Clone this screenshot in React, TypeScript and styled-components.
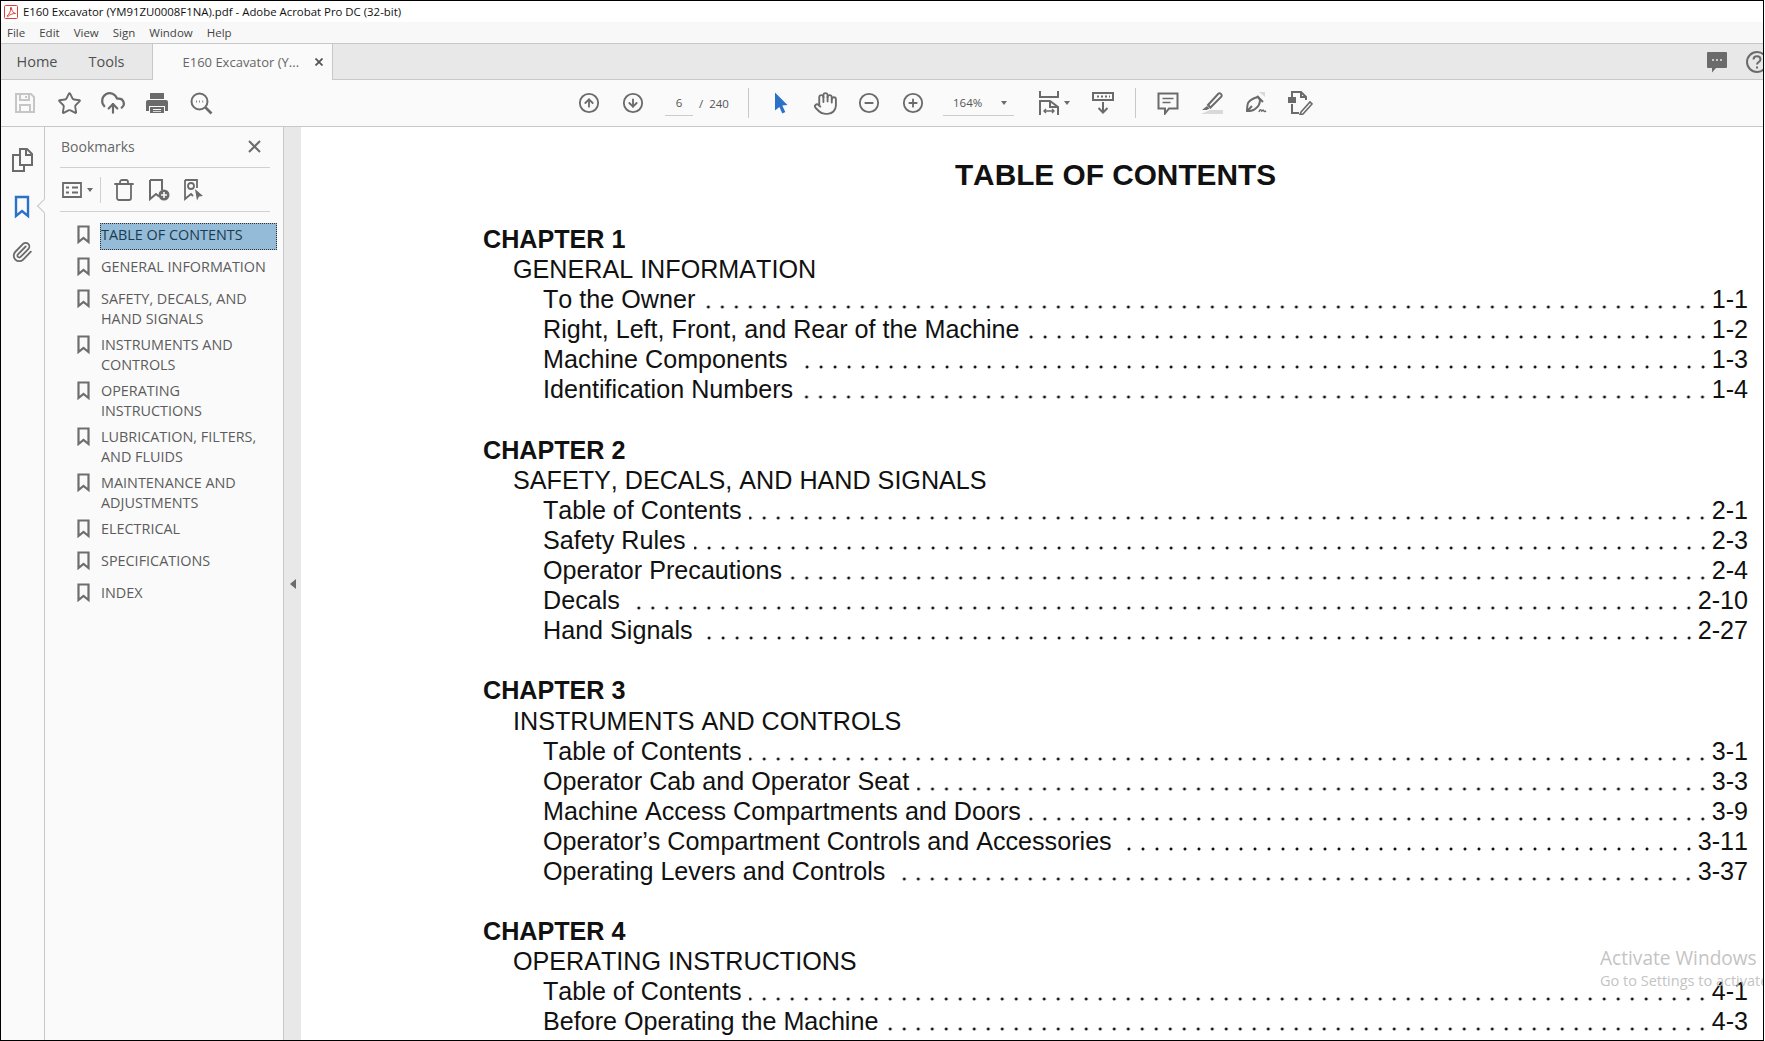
import React from "react";
import styled, { createGlobalStyle } from "styled-components";
import {
  CircleArrowDown,
  CircleArrowUp,
  CircleMinus,
  CirclePlus,
  CloudUpload,
  Hand,
  Paperclip,
  Star,
  Trash,
} from "lucide-react";

const GlobalStyle = createGlobalStyle`
  html, body {
    margin: 0;
    background: #fff;
    overflow: hidden;
  }
  * {
    box-sizing: border-box;
  }
`;

const GREY = "#6b6b6b";

const bookmarks = [
  "TABLE OF CONTENTS",
  "GENERAL INFORMATION",
  "SAFETY, DECALS, AND HAND SIGNALS",
  "INSTRUMENTS AND CONTROLS",
  "OPERATING INSTRUCTIONS",
  "LUBRICATION, FILTERS, AND FLUIDS",
  "MAINTENANCE AND ADJUSTMENTS",
  "ELECTRICAL",
  "SPECIFICATIONS",
  "INDEX",
];

const chapters = [
  {
    name: "CHAPTER 1",
    title: "GENERAL INFORMATION",
    items: [
      ["To the Owner", "1-1"],
      ["Right, Left, Front, and Rear of the Machine", "1-2"],
      ["Machine Components", "1-3"],
      ["Identification Numbers", "1-4"],
    ],
  },
  {
    name: "CHAPTER 2",
    title: "SAFETY, DECALS, AND HAND SIGNALS",
    items: [
      ["Table of Contents", "2-1"],
      ["Safety Rules", "2-3"],
      ["Operator Precautions", "2-4"],
      ["Decals", "2-10"],
      ["Hand Signals", "2-27"],
    ],
  },
  {
    name: "CHAPTER 3",
    title: "INSTRUMENTS AND CONTROLS",
    items: [
      ["Table of Contents", "3-1"],
      ["Operator Cab and Operator Seat", "3-3"],
      ["Machine Access Compartments and Doors", "3-9"],
      ["Operator’s Compartment Controls and Accessories", "3-11"],
      ["Operating Levers and Controls", "3-37"],
    ],
  },
  {
    name: "CHAPTER 4",
    title: "OPERATING INSTRUCTIONS",
    items: [
      ["Table of Contents", "4-1"],
      ["Before Operating the Machine", "4-3"],
    ],
  },
];

const SaveIcon = () => (
  <svg width="24" height="24" viewBox="0 0 24 24" fill="none" stroke="#c6c6c6" strokeWidth="2">
    <path d="M3 3h15l3 3v15H3z" />
    <path d="M7 3v6h9V3M13 5v2M7 21v-7h10v7" />
  </svg>
);

const PrinterIcon = () => (
  <svg width="24" height="24" viewBox="0 0 24 24" fill={GREY}>
    <path d="M5 2h14v6H5z" />
    <path d="M3 9h18a2 2 0 0 1 2 2v9h-3v-5H4v5H1v-9a2 2 0 0 1 2-2z" />
    <path d="M5 16h14v6H5zM8 18v1h8v-1zM8 20v.8h8V20z" fillRule="evenodd" />
  </svg>
);

const FindIcon = () => (
  <svg width="24" height="24" viewBox="0 0 24 24" fill="none" stroke={GREY} strokeWidth="2">
    <circle cx="10.5" cy="10.5" r="8" />
    <path d="M16.5 16.5l6 6" strokeWidth="2.6" />
    <path d="M7 10.5h.8M10.2 10.5h.8M13.4 10.5h.8" strokeWidth="2" />
  </svg>
);

const CursorIcon = () => (
  <svg width="24" height="24" viewBox="0 0 24 24" fill="#2a72c8">
    <path d="M6 1.5l12.5 12.6-5.2.5 3 6.4-3 1.4-2.9-6.5L6 19.5z" />
  </svg>
);

const FitWidthIcon = () => (
  <svg width="24" height="26" viewBox="0 0 24 26" fill="none" stroke={GREY} strokeWidth="2">
    <path d="M3 1v6h18V1" />
    <path d="M3 25V11h10l8 6v8" />
    <path d="M13 11v6h8" />
    <path d="M7 21h10M9 19l-2 2 2 2M15 19l2 2-2 2" strokeWidth="1.4" />
  </svg>
);

const ScrollIcon = () => (
  <svg width="24" height="24" viewBox="0 0 24 24" fill="none" stroke={GREY} strokeWidth="2">
    <path d="M2 2h20v7H2z" />
    <path d="M6 5.5h2M10 5.5h2M14 5.5h2M18 5.5h1" strokeWidth="2" />
    <path d="M12 11v10M7.5 17l4.5 4.5 4.5-4.5" />
  </svg>
);

const CommentIcon = () => (
  <svg width="24" height="24" viewBox="0 0 24 24" fill="none" stroke={GREY} strokeWidth="2">
    <path d="M2.5 2.5h19v15H13l-4 5v-5H2.5z" />
    <path d="M6.5 7.5h11M6.5 11.5h8" strokeWidth="1.4" />
  </svg>
);

const HighlightIcon = () => (
  <svg width="24" height="24" viewBox="0 0 24 24" fill="none" stroke={GREY} strokeWidth="2">
    <path d="M1 23h22v-4H10z" fill="#d9d9d9" stroke="none" />
    <path d="M8 14L18.5 2.5c1.5-1 4 1 3 3L10.5 16.5z" />
    <path d="M7 15l2.500 2.500-3 1.500H2z" fill={GREY} stroke="none" />
  </svg>
);

const SignIcon = () => (
  <svg width="24" height="24" viewBox="0 0 24 24" fill="none" stroke={GREY} strokeWidth="2">
    <path d="M15 1h6v5z" fill="#d9d9d9" stroke="none" />
    <path d="M14 6c-4 1-8 3-10 6-1 3-1 6-1 8 3 0 6 0 8-2 3-2 5-6 5-9z" />
    <path d="M13 5l6 6M3 20l5-5" />
    <path d="M15 21c1-3 2-3 2.500-1 .5 1 1.500-2 2-.5.5 1.500 1.500 1 2.500.5" strokeWidth="1.4" />
  </svg>
);

const EditPdfIcon = () => (
  <svg width="26" height="24" viewBox="0 0 26 24" fill="none" stroke={GREY} strokeWidth="2">
    <path d="M5 6V1h9l5 5v3M5 13v9h7" />
    <path d="M14 1v5h5" />
    <path d="M1 6h8v6H1z" fill={GREY} stroke="none" />
    <path d="M14 21l9-10 2 2-9 10-3 .5z" strokeWidth="1.6" />
  </svg>
);

const ChatIcon = () => (
  <svg width="22" height="22" viewBox="0 0 22 22" fill={GREY}>
    <path d="M2 1h18a1 1 0 0 1 1 1v14a1 1 0 0 1-1 1H10l-4 4.500V17H2a1 1 0 0 1-1-1V2a1 1 0 0 1 1-1z" />
    <circle cx="7" cy="9" r="1" fill="#e8e8e8" />
    <circle cx="11" cy="9" r="1" fill="#e8e8e8" />
    <circle cx="15" cy="9" r="1" fill="#e8e8e8" />
  </svg>
);

const HelpIcon = () => (
  <svg width="22" height="22" viewBox="0 0 22 22" fill="none" stroke={GREY} strokeWidth="2">
    <circle cx="11" cy="11" r="10" />
    <path d="M7.500 8.500c0-4.500 7-4.500 7 0 0 2.500-3.500 2.500-3.500 5" />
    <path d="M11 15.500v2" />
  </svg>
);

const PdfBadge = () => (
  <svg width="14" height="14" viewBox="0 0 14 14" fill="none">
    <rect x="0.500" y="0.500" width="13" height="13" rx="1" fill="#fff" stroke="#d8403a" />
    <path d="M3 11c2-1 4-5 3.500-8 0-1 1-1 1 0 0 3 2 5 4 5.500-3 0-6 1-7.500 3-.5.5-1 0-1-.5z" stroke="#d8403a" />
  </svg>
);

const PagesIcon = () => (
  <svg width="22" height="24" viewBox="0 0 22 24" fill="none" stroke={GREY} strokeWidth="2">
    <path d="M9 1h7l5 5v11H9z" />
    <path d="M15 1v6h6" />
    <path d="M9 7H2v16h11v-6" />
  </svg>
);

const BookmarkNavIcon = () => (
  <svg width="16" height="24" viewBox="0 0 16 24" fill="none" stroke="#2a72c8" strokeWidth="2.400">
    <path d="M2 2h12v19l-6-5-6 5z" />
  </svg>
);

const ListOptionsIcon = () => (
  <svg width="20" height="18" viewBox="0 0 20 18" fill="none" stroke={GREY} strokeWidth="1.800">
    <path d="M1 2h18v14H1z" />
    <path d="M4 6.500h3M4 11.500h3M10 6.500h6M10 11.500h6" strokeWidth="2.200" />
  </svg>
);

const AddBookmarkIcon = () => (
  <svg width="22" height="24" viewBox="0 0 22 24" fill="none" stroke={GREY} strokeWidth="2">
    <path d="M2 2h12v10M2 2v19l6-5 3 2.500" />
    <circle cx="16" cy="17" r="5.500" fill={GREY} stroke="none" />
    <path d="M13 17h6M16 14v6" stroke="#fafafa" strokeWidth="1.600" />
  </svg>
);

const FindBookmarkIcon = () => (
  <svg width="22" height="24" viewBox="0 0 22 24" fill="none" stroke={GREY} strokeWidth="1.800">
    <path d="M2 2h12v8M2 2v19l6-5 2 2" />
    <circle cx="8" cy="8" r="3" />
    <path d="M12 11l8 7-4 .5-2 4z" fill={GREY} stroke="none" />
  </svg>
);

const BookmarkRowIcon = () => (
  <svg width="13" height="19" viewBox="0 0 13 19" fill="none" stroke="#6e6e6e" strokeWidth="2.200">
    <path d="M1.500 1.500h10v15.500l-5-4-5 4z" />
  </svg>
);

const CloseIcon = () => (
  <svg width="13" height="13" viewBox="0 0 13 13" stroke={GREY} strokeWidth="2">
    <path d="M1 1l11 11M12 1L1 12" />
  </svg>
);

const App: React.FC = () => (
  <>
    <GlobalStyle />
    <Frame>
      <TitleBar>
        <PdfBadge />
        <span>E160 Excavator (YM91ZU0008F1NA).pdf - Adobe Acrobat Pro DC (32-bit)</span>
      </TitleBar>
      <MenuBar>
        {["File", "Edit", "View", "Sign", "Window", "Help"].map((m) => (
          <span key={m}>{m}</span>
        ))}
      </MenuBar>
      <TabBar>
        <NavTab>Home</NavTab>
        <NavTab>Tools</NavTab>
        <DocTab>
          <span>E160 Excavator (Y...</span>
          <TabClose>
            <svg width="8" height="8" viewBox="0 0 8 8" stroke="#555" strokeWidth="1.800">
              <path d="M.5.500l7 7M7.500.500l-7 7" />
            </svg>
          </TabClose>
        </DocTab>
        <TabActions>
          <ChatIcon />
          <HelpIcon />
        </TabActions>
      </TabBar>
      <Toolbar>
        <ToolGroup>
          <ToolButton><SaveIcon /></ToolButton>
          <ToolButton><Star size={25} strokeWidth={1.800} /></ToolButton>
          <ToolButton><CloudUpload size={26} strokeWidth={2} /></ToolButton>
          <ToolButton><PrinterIcon /></ToolButton>
          <ToolButton><FindIcon /></ToolButton>
        </ToolGroup>
        <CenterGroup>
          <ToolButton><CircleArrowUp size={22} strokeWidth={2} /></ToolButton>
          <ToolButton><CircleArrowDown size={22} strokeWidth={2} /></ToolButton>
          <PageField>6</PageField>
          <PageTotal>/&nbsp;&nbsp;240</PageTotal>
          <ToolDivider $before="9px" $after="10px" />
          <ToolButton><CursorIcon /></ToolButton>
          <ToolButton><Hand size={25} strokeWidth={1.800} /></ToolButton>
          <ToolButton><CircleMinus size={22} strokeWidth={2} /></ToolButton>
          <ToolButton><CirclePlus size={22} strokeWidth={2} /></ToolButton>
          <ZoomField>
            <span>164%</span>
            <Caret />
          </ZoomField>
          <FitButton>
            <FitWidthIcon />
            <Caret />
          </FitButton>
          <ToolButton><ScrollIcon /></ToolButton>
          <ToolDivider $before="10px" $after="10px" />
          <ToolButton><CommentIcon /></ToolButton>
          <ToolButton><HighlightIcon /></ToolButton>
          <ToolButton><SignIcon /></ToolButton>
          <ToolButton><EditPdfIcon /></ToolButton>
        </CenterGroup>
      </Toolbar>
      <Body>
        <Rail>
          <RailItem><PagesIcon /></RailItem>
          <RailItem $active><BookmarkNavIcon /></RailItem>
          <RailItem><Paperclip size={22} strokeWidth={2} /></RailItem>
        </Rail>
        <Panel>
          <PanelHeader>
            <span>Bookmarks</span>
            <CloseIcon />
          </PanelHeader>
          <PanelTools>
            <OptionsButton>
              <ListOptionsIcon />
              <Caret />
            </OptionsButton>
            <PanelToolDivider />
            <PanelTool><Trash size={24} strokeWidth={1.800} /></PanelTool>
            <PanelTool><AddBookmarkIcon /></PanelTool>
            <PanelTool><FindBookmarkIcon /></PanelTool>
          </PanelTools>
          <BookmarkList>
            {bookmarks.map((b, i) => (
              <BookmarkRow key={b}>
                <BookmarkMark><BookmarkRowIcon /></BookmarkMark>
                <BookmarkLabel $selected={i === 0}>{b}</BookmarkLabel>
              </BookmarkRow>
            ))}
          </BookmarkList>
        </Panel>
        <Gutter>
          <CollapseArrow />
        </Gutter>
        <Page>
          <PageTitle>TABLE OF CONTENTS</PageTitle>
          {chapters.map((c) => (
            <Chapter key={c.name}>
              <ChapterName>{c.name}</ChapterName>
              <ChapterTitle>{c.title}</ChapterTitle>
              {c.items.map(([label, num]) => (
                <TocRow key={label}>
                  <span>{label}</span>
                  <Leader />
                  <TocNumber>{num}</TocNumber>
                </TocRow>
              ))}
            </Chapter>
          ))}
        </Page>
      </Body>
      <Watermark>
        <WatermarkTitle>Activate Windows</WatermarkTitle>
        <WatermarkText>Go to Settings to activate Windows.</WatermarkText>
      </Watermark>
    </Frame>
  </>
);

const Frame = styled.div`
  position: relative;
  display: flex;
  flex-direction: column;
  width: 1764px;
  height: 1041px;
  border: 1px solid #000;
  overflow: hidden;
  background: #fff;
  font-family: "Open Sans", "Noto Sans", sans-serif;
  color: #555;
`;

const TitleBar = styled.div`
  display: flex;
  align-items: center;
  gap: 5px;
  height: 21px;
  padding-left: 3px;
  font-size: 11.4px;
  color: #111;
`;

const MenuBar = styled.div`
  display: flex;
  align-items: center;
  gap: 14px;
  height: 21px;
  padding-left: 6px;
  background: #f8f8f8;
  font-size: 11.500px;
  color: #444;
`;

const TabBar = styled.div`
  display: flex;
  height: 37px;
  background: #e8e8e8;
  border-top: 1px solid #c8c8c8;
  border-bottom: 1px solid #c8c8c8;
`;

const NavTab = styled.div`
  display: flex;
  align-items: center;
  padding: 0 15.5px;
  font-size: 14.500px;
  color: #505050;
`;

const DocTab = styled.div`
  display: flex;
  align-items: center;
  justify-content: space-between;
  width: 181px;
  margin-left: 11.5px;
  margin-bottom: -1px;
  padding: 0 9px 0 30px;
  background: #fafafa;
  border-left: 1px solid #c8c8c8;
  border-right: 1px solid #c8c8c8;
  font-size: 13px;
  color: #666;
`;

const TabClose = styled.span`
  display: flex;
`;

const TabActions = styled.div`
  display: flex;
  align-items: center;
  gap: 18px;
  margin-left: auto;
  margin-right: -5px;
`;

const Toolbar = styled.div`
  display: flex;
  align-items: center;
  height: 47px;
  padding-left: 2px;
  background: #fafafa;
  border-bottom: 1px solid #c8c8c8;
`;

const ToolGroup = styled.div`
  display: flex;
  align-items: center;
`;

const CenterGroup = styled(ToolGroup)`
  margin-left: 344px;
`;

const ToolButton = styled.div`
  display: flex;
  align-items: center;
  justify-content: center;
  width: 44px;
  height: 30px;
  color: ${GREY};
`;

const PageField = styled.div`
  width: 28px;
  height: 26px;
  margin-left: 10px;
  border-bottom: 1px solid #ccc;
  text-align: center;
  font-size: 11.500px;
  line-height: 25px;
`;

const PageTotal = styled.div`
  width: 46px;
  padding-left: 6px;
  font-size: 11.500px;
  white-space: nowrap;
`;

const ToolDivider = styled.div<{ $before: string; $after: string }>`
  width: 1px;
  height: 30px;
  margin: 0 ${(p) => p.$after} 0 ${(p) => p.$before};
  background: #c8c8c8;
`;

const Caret = styled.span`
  width: 0;
  height: 0;
  border-left: 3.500px solid transparent;
  border-right: 3.500px solid transparent;
  border-top: 4px solid ${GREY};
`;

const ZoomField = styled.div`
  display: flex;
  align-items: center;
  justify-content: space-between;
  width: 71px;
  height: 26px;
  margin-left: 8px;
  padding: 0 7px 0 10px;
  border-bottom: 1px solid #ccc;
  font-size: 11.500px;
`;

const FitButton = styled.div`
  display: flex;
  align-items: center;
  justify-content: center;
  gap: 3px;
  width: 56px;
  margin-left: 11px;
`;

const Body = styled.div`
  display: flex;
  flex: 1;
  min-height: 0;
`;

const Rail = styled.div`
  display: flex;
  flex-direction: column;
  align-items: center;
  gap: 2px;
  width: 44px;
  padding-top: 11px;
  padding-right: 2px;
  background: #fafafa;
  border-right: 1px solid #c8c8c8;
`;

const RailItem = styled.div<{ $active?: boolean }>`
  position: relative;
  display: flex;
  align-items: center;
  justify-content: center;
  width: 100%;
  height: 44px;
  color: ${GREY};

  ${(p) =>
    p.$active &&
    `
    padding-top: 2px;
    &::after {
      content: "";
      position: absolute;
      right: -7px;
      top: 17px;
      width: 9px;
      height: 9px;
      background: #fafafa;
      border-left: 1px solid #c8c8c8;
      border-bottom: 1px solid #c8c8c8;
      transform: rotate(45deg);
    }
  `}
`;

const Panel = styled.div`
  display: flex;
  flex-direction: column;
  width: 239px;
  padding: 0 13px 0 15px;
  background: #fafafa;
  border-right: 1px solid #c8c8c8;
`;

const PanelHeader = styled.div`
  display: flex;
  align-items: center;
  justify-content: space-between;
  height: 41px;
  padding: 0 9px 2px 1px;
  border-bottom: 1px solid #d0d0d0;
  font-size: 14px;
  color: #666;
`;

const PanelTools = styled.div`
  display: flex;
  align-items: center;
  height: 44px;
  border-bottom: 1px solid #d0d0d0;
  color: ${GREY};
`;

const OptionsButton = styled.div`
  display: flex;
  align-items: center;
  gap: 5px;
  padding-left: 2px;
`;

const PanelToolDivider = styled.div`
  width: 1px;
  height: 26px;
  margin: 0 5px 0 7px;
  background: #d0d0d0;
`;

const PanelTool = styled.div`
  display: flex;
  justify-content: center;
  width: 35px;
`;

const BookmarkList = styled.div`
  display: flex;
  flex-direction: column;
  margin-top: 12px;
  margin-right: -7px;
  margin-left: 2px;
`;

const BookmarkRow = styled.div`
  display: flex;
  min-height: 32px;
  padding-bottom: 5px;
`;

const BookmarkMark = styled.div`
  width: 23px;
  padding-top: 1px;
  flex-shrink: 0;
  margin-left: 15px;
`;

const BookmarkLabel = styled.div<{ $selected?: boolean }>`
  flex: 1;
  height: fit-content;
  padding: 1px 0 0 1px;
  font-size: 14.4px;
  line-height: 20px;
  color: ${(p) => (p.$selected ? "#1c3a4e" : "#5c5c5c")};
  ${(p) =>
    p.$selected &&
    `
    background: #94bcd8;
    outline: 1px dotted #333;
    outline-offset: -1px;
    height: 27px;
    margin-top: -1px;
    padding-top: 2px;
  `}
`;

const Gutter = styled.div`
  display: flex;
  align-items: center;
  justify-content: center;
  width: 17px;
  background: #e8e8e8;
`;

const CollapseArrow = styled.span`
  width: 0;
  height: 0;
  border-top: 5px solid transparent;
  border-bottom: 5px solid transparent;
  border-right: 6px solid ${GREY};
`;

const Page = styled.div`
  flex: 1;
  min-width: 0;
  padding: 0 15px 0 182px;
  overflow: hidden;
  background: #fff;
  font-family: "Liberation Sans", Arial, sans-serif;
  font-size: 25.150px;
  font-kerning: none;
  line-height: 30.100px;
  color: #111;
`;

const PageTitle = styled.h1`
  margin: 31px 0 32px;
  font-size: 29.800px;
  line-height: 34px;
  font-weight: 700;
  text-align: center;
`;

const Chapter = styled.section`
  margin-bottom: 30.100px;
`;

const ChapterName = styled.div`
  font-weight: 700;
`;

const ChapterTitle = styled.div`
  padding-left: 30px;
`;

const TocRow = styled.div`
  display: flex;
  padding-left: 60px;
  white-space: nowrap;
`;

const Leader = styled.span`
  flex: 1;
  min-width: 0;
  margin: 0 2px 0 8px;
  background: radial-gradient(circle at 7px 23px, #111 1.2px, transparent 1.8px) right top / 14px 30px repeat-x;
`;

const TocNumber = styled.span`
  flex-shrink: 0;
`;

const Watermark = styled.div`
  position: absolute;
  left: 1599px;
  top: 944px;
  white-space: nowrap;
  color: #c4c4c4;
`;

const WatermarkTitle = styled.div`
  font-size: 19.100px;
  line-height: 26px;
`;

const WatermarkText = styled.div`
  font-size: 14.500px;
  line-height: 20px;
`;

export default App;
